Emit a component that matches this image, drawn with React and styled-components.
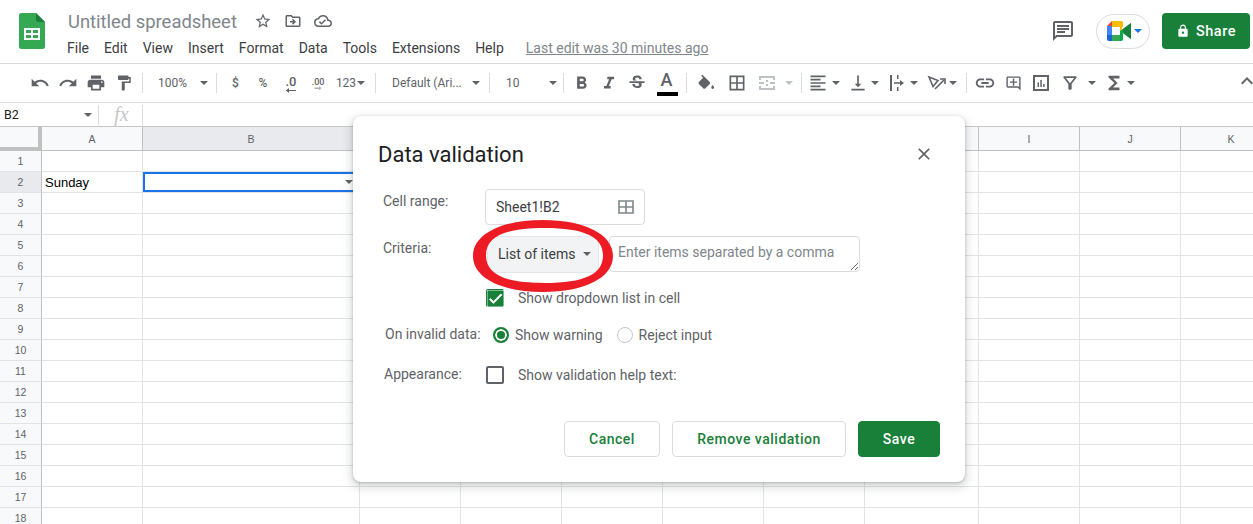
import React from "react";
import styled, { createGlobalStyle } from "styled-components";
import {
  MdUndo, MdRedo, MdPrint, MdFormatPaint, MdFormatBold, MdFormatItalic, MdStrikethroughS,
  MdBorderAll, MdFormatAlignLeft, MdVerticalAlignBottom, MdLink,
  MdOutlineAddComment, MdFunctions, MdExpandLess,
  MdStarBorder, MdOutlineDriveFileMove, MdOutlineCloudDone, MdOutlineChat, MdLock, MdClose,
  MdCheck, MdOutlineFilterAlt,
} from "react-icons/md";

const GlobalStyle = createGlobalStyle`
  html, body { margin: 0; padding: 0; background: #fff; }
  body { font-family: Roboto, "Liberation Sans", sans-serif; }
`;

const Page = styled.div`
  position: relative;
  width: 1253px;
  height: 524px;
  overflow: hidden;
  background: #fff;
`;

const Header = styled.header`
  height: 63px;
  display: flex;
  border-bottom: 1px solid #dadce0;
  box-sizing: content-box;
`;

const Logo = styled.svg`
  width: 26px;
  height: 36px;
  margin: 13px 22px 0 19px;
  flex: none;
`;

const TitleBlock = styled.div`
  flex: 1;
  display: flex;
  flex-direction: column;
  padding-top: 9px;
`;

const TitleRow = styled.div`
  display: flex;
  align-items: center;
  height: 24px;
  margin-left: 1px;
`;

const Title = styled.span`
  font-size: 18.4px;
  color: #80868b;
  margin-right: 17px;
`;

const TitleIcon = styled.span`
  display: flex;
  width: 20px;
  margin-right: 10px;
  font-size: 18px;
  color: #5f6368;
`;

const MenuRow = styled.nav`
  display: flex;
  align-items: center;
  gap: 15px;
  height: 24px;
  margin-top: 3px;
  font-size: 14px;
  color: #3c4043;
`;

const LastEdit = styled.span`
  margin-left: 7px;
  color: #80868b;
  text-decoration: underline;
`;

const HeaderRight = styled.div`
  display: flex;
  align-items: center;
  height: 36px;
  margin: 13px 3px 0 0;
`;

const CommentButton = styled.span`
  display: flex;
  font-size: 24px;
  color: #5f6368;
  margin-right: 21px;
`;

const MeetPill = styled.div`
  display: flex;
  align-items: center;
  gap: 3px;
  width: 54px;
  height: 35px;
  box-sizing: border-box;
  padding-left: 10px;
  border: 1px solid #dadce0;
  border-radius: 18px;
  margin-right: 12px;
`;

const ShareButton = styled.button`
  display: flex;
  align-items: center;
  justify-content: center;
  gap: 6px;
  width: 88px;
  height: 36px;
  padding: 0;
  border: none;
  border-radius: 4px;
  background: #188038;
  color: #fff;
  font: 500 14.5px Roboto, sans-serif;
  letter-spacing: 0.5px;
`;

const Toolbar = styled.div`
  height: 38px;
  display: flex;
  align-items: center;
  padding-left: 26px;
  border-bottom: 1px solid #dadce0;
  color: #5f6368;
  position: relative;
`;

const Tool = styled.span`
  display: flex;
  align-items: center;
  justify-content: ${(p) => p.$align || "center"};
  flex: none;
  width: ${(p) => p.$w}px;
  height: 28px;
  margin-left: ${(p) => p.$ml || 0}px;
  font-size: ${(p) => p.$size || 20}px;
  color: #5f6368;
  position: relative;
`;

const ToolText = styled.span`
  font-size: ${(p) => p.$size || 12}px;
  font-weight: ${(p) => p.$weight || 400};
  margin-left: ${(p) => p.$ml || 0}px;
  color: #5f6368;
  white-space: nowrap;
`;

const Caret = styled.span`
  flex: none;
  width: 0;
  height: 0;
  margin-left: ${(p) => p.$ml || 0}px;
  border-left: 4px solid transparent;
  border-right: 4px solid transparent;
  border-top: 4px solid ${(p) => p.$color || "#5f6368"};
`;

const Sep = styled.span`
  flex: none;
  width: 1px;
  height: 20px;
  background: #dadce0;
  margin-left: ${(p) => p.$ml || 0}px;
`;

const ColorBar = styled.span`
  position: absolute;
  left: 50%;
  bottom: 1px;
  width: 21px;
  height: 4px;
  margin-left: -11px;
  background: #000;
`;

const ColorLetter = styled.span`
  font-size: 18px;
  font-weight: 500;
  margin: -7px 2px 0 0;
  color: #5f6368;
`;

const CollapseButton = styled.span`
  position: absolute;
  right: -6px;
  top: 5px;
  display: flex;
  font-size: 24px;
  color: #5f6368;
`;

const FormulaBar = styled.div`
  height: 23px;
  display: flex;
  align-items: center;
  border-bottom: 1px solid #c4c7c5;
`;

const NameBox = styled.div`
  width: 99px;
  height: 20px;
  box-sizing: border-box;
  display: flex;
  align-items: center;
  justify-content: space-between;
  padding: 0 6px 0 4px;
  font-size: 12.5px;
  color: #202124;
  border-right: 1px solid #dadce0;
`;

const FxBox = styled.div`
  width: 44px;
  height: 20px;
  box-sizing: border-box;
  display: flex;
  align-items: center;
  justify-content: center;
  padding-left: 2px;
  font: italic 20px "Liberation Serif", serif;
  color: #c4c7c5;
  border-right: 1px solid #dadce0;
`;

const Sheet = styled.div`
  display: grid;
  grid-template-columns: ${(p) => p.$cols};
  grid-template-rows: 24px repeat(19, 21px);
  font-family: "Liberation Sans", Arial, sans-serif;
`;

const Corner = styled.div`
  background: #f8f9fa;
  border-right: 4px solid #c0c0c0;
  border-bottom: 4px solid #c0c0c0;
  box-sizing: border-box;
`;

const ColHead = styled.div`
  display: flex;
  align-items: center;
  justify-content: center;
  box-sizing: border-box;
  font-size: 10.5px;
  color: #5f6368;
  background: ${(p) => (p.$on ? "#e8eaed" : "#f8f9fa")};
  border-right: 1px solid #c0c0c0;
  border-bottom: 1px solid #c0c0c0;
`;

const RowHead = styled.div`
  display: flex;
  align-items: center;
  justify-content: center;
  box-sizing: border-box;
  font-size: 10.5px;
  color: #5f6368;
  background: ${(p) => (p.$on ? "#e8eaed" : "#f8f9fa")};
  border-right: 1px solid #c0c0c0;
  border-bottom: 1px solid #e2e3e3;
`;

const Cell = styled.div`
  display: flex;
  align-items: center;
  justify-content: flex-end;
  box-sizing: border-box;
  padding: 0 3px;
  font-size: 13px;
  color: #000;
  border-right: 1px solid #e2e3e3;
  border-bottom: 1px solid #e2e3e3;
  ${(p) => p.$selected && "box-shadow: inset 0 0 0 2px #1a73e8; padding-right: 6px;"}
  ${(p) => p.$left && "justify-content: flex-start;"}
`;

const Dialog = styled.section`
  position: absolute;
  left: 353px;
  top: 116px;
  width: 612px;
  height: 366px;
  box-sizing: border-box;
  padding: 0 25px;
  background: #fff;
  border-radius: 8px;
  box-shadow: 0 4px 8px 3px rgba(60, 64, 67, 0.15), 0 1px 3px rgba(60, 64, 67, 0.3);
  color: #5f6368;
  display: flex;
  flex-direction: column;
`;

const DialogHead = styled.div`
  height: 73px;
  padding-top: 26px;
  box-sizing: border-box;
  display: flex;
  justify-content: space-between;
  align-items: flex-start;
`;

const DialogTitle = styled.h2`
  margin: 0;
  font-size: 22px;
  line-height: 26px;
  font-weight: 400;
  color: #202124;
`;

const CloseIcon = styled.span`
  display: flex;
  font-size: 20px;
  margin: 2px 6px 0 0;
  color: #5f6368;
`;

const FormRow = styled.div`
  display: flex;
  align-items: ${(p) => p.$align || "center"};
  height: ${(p) => p.$h}px;
  margin-top: ${(p) => p.$mt || 0}px;
`;

const Label = styled.span`
  flex: none;
  width: ${(p) => p.$w || 107}px;
  padding-left: ${(p) => p.$pl || 5}px;
  box-sizing: border-box;
  margin-top: ${(p) => p.$mt || 0}px;
  font-size: 14px;
  color: #5f6368;
  white-space: nowrap;
`;

const RangeInput = styled.div`
  width: 160px;
  height: 36px;
  box-sizing: border-box;
  display: flex;
  align-items: center;
  justify-content: space-between;
  padding: 0 10px;
  border: 1px solid #dadce0;
  border-radius: 4px;
  font-size: 14px;
  color: #3c4043;
`;

const GridIcon = styled.span`
  display: flex;
  color: #80868b;
`;

const SelectBox = styled.div`
  width: 112px;
  height: 37px;
  margin-left: 2px;
  box-sizing: border-box;
  display: flex;
  align-items: center;
  gap: 8px;
  padding: 0 0 2px 10px;
  background: #f1f3f4;
  border: 1px solid #e3e5e6;
  border-radius: 4px;
  font-size: 14px;
  color: #3c4043;
`;

const ItemsArea = styled.textarea`
  width: 251px;
  height: 36px;
  margin-left: 10px;
  box-sizing: border-box;
  padding: 6px 8px;
  border: 1px solid #dadce0;
  border-radius: 4px;
  font: 14px/18px Roboto, sans-serif;
  color: #3c4043;
  outline: none;
  &::placeholder {
    color: #80868b;
    opacity: 1;
  }
`;

const CheckBox = styled.span`
  display: flex;
  align-items: center;
  justify-content: center;
  flex: none;
  width: 18px;
  height: 18px;
  box-sizing: border-box;
  margin-left: 1px;
  margin-right: 14px;
  border-radius: 2px;
  font-size: 17px;
  color: #fff;
  background: ${(p) => (p.$on ? "#188038" : "#fff")};
  border: 2px solid ${(p) => (p.$on ? "#188038" : "#5f6368")};
  svg {
    flex: none;
    stroke: #fff;
    stroke-width: 1.2;
  }
`;

const OptionText = styled.span`
  font-size: 14px;
  color: #5f6368;
  margin-right: ${(p) => p.$mr || 0}px;
`;

const Radio = styled.span`
  flex: none;
  width: 16px;
  height: 16px;
  box-sizing: border-box;
  margin-right: 6px;
  border-radius: 50%;
  border: ${(p) => (p.$on ? "2px solid #188038" : "1px solid #c4c7c5")};
  background: ${(p) => (p.$on ? "#188038" : "#fff")};
  box-shadow: ${(p) => (p.$on ? "inset 0 0 0 2px #fff" : "none")};
`;

const Actions = styled.div`
  display: flex;
  justify-content: flex-end;
  gap: 12px;
  margin-top: 37px;
`;

const ActionButton = styled.button`
  width: ${(p) => p.$w}px;
  height: 36px;
  padding: 0;
  box-sizing: border-box;
  border-radius: 4px;
  border: 1px solid ${(p) => (p.$primary ? "#188038" : "#dadce0")};
  background: ${(p) => (p.$primary ? "#188038" : "#fff")};
  color: ${(p) => (p.$primary ? "#fff" : "#188038")};
  font: 500 14px Roboto, sans-serif;
  letter-spacing: 0.5px;
`;

const RedMark = styled.svg`
  position: absolute;
  left: 470px;
  top: 216px;
  width: 146px;
  height: 80px;
  pointer-events: none;
`;

const columns = [
  ["A", 101], ["B", 217], ["C", 101], ["D", 101], ["E", 101], ["F", 101],
  ["G", 101], ["H", 114], ["I", 101], ["J", 101], ["K", 101],
];
const gridCols = "42px " + columns.map((c) => c[1] + "px").join(" ");
const menus = ["File", "Edit", "View", "Insert", "Format", "Data", "Tools", "Extensions", "Help"];
const rowNumbers = Array.from({ length: 19 }, (_, i) => i + 1);

const SheetsLogo = () => (
  <Logo viewBox="0 0 26 36">
    <path d="M2.500 0H17l9 9v24.500a2.500 2.500 0 0 1-2.500 2.500h-21A2.500 2.500 0 0 1 0 33.500v-31A2.500 2.500 0 0 1 2.500 0z" fill="#34a853" />
    <path d="M17 0l9 9h-7a2 2 0 0 1-2-2z" fill="#188038" />
    <path d="M5 15h16v12H5zM7 17v3h5v-3zm7 0v3h5v-3zM7 22v3h5v-3zm7 0v3h5v-3z" fill="#fff" fillRule="evenodd" />
  </Logo>
);

const MeetIcon = () => (
  <svg width="24" height="20" viewBox="0 0 24 20">
    <path d="M5 0h10v6H5z" fill="#fbbc04" />
    <path d="M5 0v5H0z" fill="#ea4335" />
    <path d="M0 5h5v9H0z" fill="#4285f4" />
    <path d="M0 14h5v6H2a2 2 0 0 1-2-2z" fill="#1967d2" />
    <path d="M5 14h8v6H5z" fill="#34a853" />
    <path d="M13 6h2v4l-2 1zM15 0a2 2 0 0 1 1 2v4h-1z" fill="#fbbc04" />
    <path d="M13 10l3-2 8-6v16l-8-6v6a2 2 0 0 1-2 2h-1z" fill="#00ac47" />
    <path d="M16 8l8-6v16l-8-6z" fill="#188038" />
    <path d="M5 6h8v8H5z" fill="#fff" />
  </svg>
);

const DotAlignIcon = () => (
  <svg width="20" height="20" viewBox="0 0 20 20" fill="#5f6368">
    <path d="M3 2h2v16H3zM10 2h1.500v4H10zM10 14h1.500v4H10zM7 9.200h6v1.600H7zM13 7l4 3-4 3z" />
  </svg>
);

const RotateIcon = () => (
  <svg width="20" height="20" viewBox="0 0 20 20" fill="none" stroke="#5f6368" strokeWidth="1.600">
    <path d="M2 4l9 3.500-5 6zM8 16l9-9" />
    <path d="M13 6h5v5" />
  </svg>
);

const MergeIcon = () => (
  <svg width="20" height="20" viewBox="0 0 20 20" fill="#bdc1c6">
    <path d="M2 3h16v4h-2V5H4v2H2zM2 13h2v2h12v-2h2v4H2zM2 9h5v2H2zM13 9h5v2h-5zM9 7h2v2H9zM9 11h2v2H9z" />
  </svg>
);

const FillIcon = () => (
  <svg width="20" height="20" viewBox="0 0 24 24" fill="#5f6368">
    <path d="M16.560 10.940L7.620 2 6.210 3.410l2.380 2.380-5.150 5.150c-.59.59-.59 1.540 0 2.120l5.500 5.500c.29.29.68.44 1.060.44s.77-.15 1.060-.44l5.500-5.500c.59-.58.59-1.530 0-2.110z" />
    <path d="M20 14.500s-1.700 1.900-1.700 3c0 .9.800 1.700 1.700 1.700s1.700-.8 1.700-1.700c0-1.100-1.700-3-1.700-3z" />
  </svg>
);

const ChartIcon = () => (
  <svg width="18" height="18" viewBox="0 0 18 18" fill="#5f6368">
    <path d="M1 1h16v16H1zM3 3v12h12V3z" fillRule="evenodd" />
    <path d="M5.500 8.500h1.500v4.500H5.500zM8.300 6h1.500v7H8.300zM11.100 10h1.500v3h-1.500z" />
  </svg>
);

const TableIcon = () => (
  <svg width="16" height="14" viewBox="0 0 16 14" fill="none" stroke="currentColor" strokeWidth="1.600">
    <path d="M1 1h14v12H1zM8 1v12M1 7h14" />
  </svg>
);

const Decimal = ({ label, arrow }) => (
  <svg width="26" height="24" viewBox="0 0 26 24" fill="#5f6368">
    <text x="13" y="15" textAnchor="middle" fontSize="13" fontWeight="500" fontFamily="Roboto, sans-serif">{label}</text>
    <path d={arrow} />
  </svg>
);

export default function App() {
  return (
    <Page>
      <GlobalStyle />
      <Header>
        <SheetsLogo />
        <TitleBlock>
          <TitleRow>
            <Title>Untitled spreadsheet</Title>
            <TitleIcon><MdStarBorder /></TitleIcon>
            <TitleIcon><MdOutlineDriveFileMove /></TitleIcon>
            <TitleIcon><MdOutlineCloudDone /></TitleIcon>
          </TitleRow>
          <MenuRow>
            {menus.map((m) => <span key={m}>{m}</span>)}
            <LastEdit>Last edit was 30 minutes ago</LastEdit>
          </MenuRow>
        </TitleBlock>
        <HeaderRight>
          <CommentButton><MdOutlineChat /></CommentButton>
          <MeetPill>
            <MeetIcon />
            <Caret $color="#1a73e8" />
          </MeetPill>
          <ShareButton><MdLock size={14} />Share</ShareButton>
        </HeaderRight>
      </Header>

      <Toolbar>
        <Tool $w={28}><MdUndo /></Tool>
        <Tool $w={28}><MdRedo /></Tool>
        <Tool $w={28}><MdPrint /></Tool>
        <Tool $w={28} $size={18}><MdFormatPaint /></Tool>
        <Sep $ml={4} />
        <Tool $w={73} $align="flex-start"><ToolText $ml={15}>100%</ToolText><Caret $ml={13} /></Tool>
        <Sep />
        <Tool $w={37}><ToolText $weight={500}>$</ToolText></Tool>
        <Tool $w={18}><ToolText $weight={500}>%</ToolText></Tool>
        <Tool $w={37}><Decimal label=".0" arrow="M8 19h10v1H8zM8 19.500l3-2.500v5z" /></Tool>
        <Tool $w={18}><Decimal label=".00" arrow="M8 19h10v1H8zM18 19.500l-3-2.500v5z" /></Tool>
        <Tool $w={47}><ToolText>123</ToolText><Caret $ml={1} /></Tool>
        <Sep $ml={1} />
        <Tool $w={113} $align="flex-start"><ToolText $ml={16}>Default (Ari...</ToolText><Caret $ml={10} /></Tool>
        <Sep />
        <Tool $w={73} $align="flex-start"><ToolText $ml={16}>10</ToolText><Caret $ml={29} /></Tool>
        <Sep />
        <Tool $w={35} $size={21}><MdFormatBold /></Tool>
        <Tool $w={20} $size={21}><MdFormatItalic /></Tool>
        <Tool $w={36} $size={20}><MdStrikethroughS /></Tool>
        <Tool $w={25}><ColorLetter>A</ColorLetter><ColorBar /></Tool>
        <Sep $ml={6} />
        <Tool $w={37}><FillIcon /></Tool>
        <Tool $w={25} $size={20}><MdBorderAll /></Tool>
        <Tool $w={35}><MergeIcon /></Tool>
        <Tool $w={10}><Caret $color="#bdc1c6" /></Tool>
        <Sep $ml={7} />
        <Tool $w={26} $size={20} $ml={3}><MdFormatAlignLeft /></Tool>
        <Tool $w={10}><Caret /></Tool>
        <Tool $w={24} $ml={5}><MdVerticalAlignBottom /></Tool>
        <Tool $w={10}><Caret /></Tool>
        <Tool $w={20} $ml={7}><DotAlignIcon /></Tool>
        <Tool $w={10} $ml={2}><Caret /></Tool>
        <Tool $w={20} $ml={8}><RotateIcon /></Tool>
        <Tool $w={10} $ml={1}><Caret /></Tool>
        <Sep $ml={8} />
        <Tool $w={36}><MdLink size={22} /></Tool>
        <Tool $w={20} $size={17}><MdOutlineAddComment /></Tool>
        <Tool $w={36}><ChartIcon /></Tool>
        <Tool $w={22}><MdOutlineFilterAlt /></Tool>
        <Tool $w={22}><Caret /></Tool>
        <Tool $w={22} $size={22}><MdFunctions /></Tool>
        <Tool $w={12}><Caret /></Tool>
        <CollapseButton><MdExpandLess /></CollapseButton>
      </Toolbar>

      <FormulaBar>
        <NameBox>B2<Caret /></NameBox>
        <FxBox>fx</FxBox>
      </FormulaBar>

      <Sheet $cols={gridCols}>
        <Corner />
        {columns.map(([name]) => <ColHead key={name} $on={name === "B"}>{name}</ColHead>)}
        {rowNumbers.map((row) => (
          <React.Fragment key={row}>
            <RowHead $on={row === 2}>{row < 19 ? row : ""}</RowHead>
            {columns.map(([name]) => {
              const selected = row === 2 && name === "B";
              return (
                <Cell key={name} $selected={selected} $left={row === 2 && name === "A"}>
                  {row === 2 && name === "A" && "Sunday"}
                  {selected && <Caret />}
                </Cell>
              );
            })}
          </React.Fragment>
        ))}
      </Sheet>

      <Dialog>
        <DialogHead>
          <DialogTitle>Data validation</DialogTitle>
          <CloseIcon><MdClose /></CloseIcon>
        </DialogHead>
        <FormRow $h={36} $align="flex-start">
          <Label $mt={4}>Cell range:</Label>
          <RangeInput>Sheet1!B2<GridIcon><TableIcon /></GridIcon></RangeInput>
        </FormRow>
        <FormRow $h={37} $mt={11} $align="flex-start">
          <Label $mt={4}>Criteria:</Label>
          <SelectBox>List of items<Caret /></SelectBox>
          <ItemsArea placeholder="Enter items separated by a comma" />
        </FormRow>
        <FormRow $h={18} $mt={16}>
          <Label />
          <CheckBox $on><MdCheck /></CheckBox>
          <OptionText>Show dropdown list in cell</OptionText>
        </FormRow>
        <FormRow $h={18} $mt={19}>
          <Label $pl={7} $w={115} $mt={-2}>On invalid data:</Label>
          <Radio $on />
          <OptionText $mr={14}>Show warning</OptionText>
          <Radio />
          <OptionText>Reject input</OptionText>
        </FormRow>
        <FormRow $h={18} $mt={22}>
          <Label $pl={6} $mt={-2}>Appearance:</Label>
          <CheckBox />
          <OptionText>Show validation help text:</OptionText>
        </FormRow>
        <Actions>
          <ActionButton $w={96}>Cancel</ActionButton>
          <ActionButton $w={174}>Remove validation</ActionButton>
          <ActionButton $w={82} $primary>Save</ActionButton>
        </Actions>
      </Dialog>

      <RedMark viewBox="0 0 146 80">
        <path
          fillRule="evenodd"
          fill="#ed1c24"
          d="M3 40C3 18.400 31 4 73 4C115 4 143 18.400 143 40C143 61.600 115 76 73 76C31 76 3 61.600 3 40ZM16 39.500C16 58.200 34.700 67 74.500 67C114.300 67 133 58.200 133 39.500C133 20.800 114.300 12 74.500 12C34.700 12 16 20.800 16 39.500Z"
        />
      </RedMark>
    </Page>
  );
}
